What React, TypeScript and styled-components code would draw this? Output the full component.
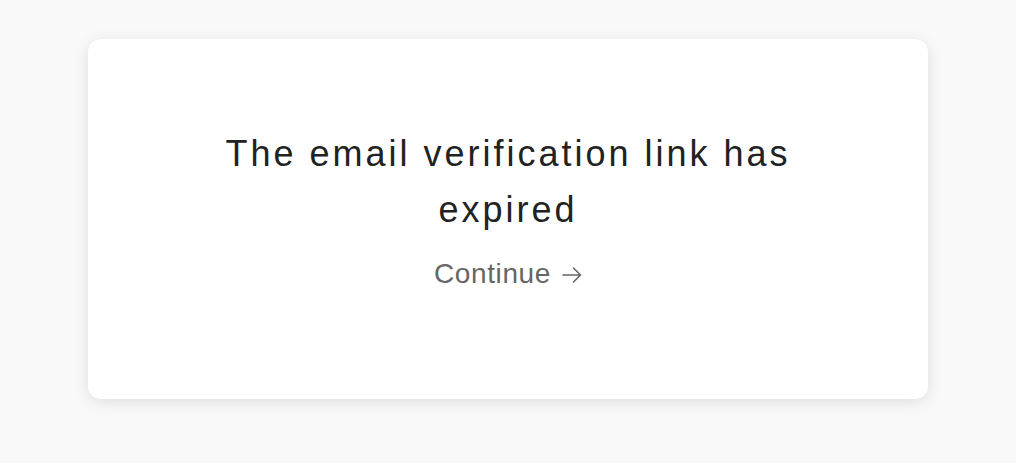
import React from "react";
import styled, { createGlobalStyle } from "styled-components";

const GlobalStyle = createGlobalStyle`
  html, body {
    margin: 0;
    padding: 0;
    background: #f9f9f9;
  }
  body {
    font-family: "Liberation Sans", Arial, Helvetica, sans-serif;
    -webkit-font-smoothing: antialiased;
  }
`;

const Page = styled.main`
  min-height: 463px;
  box-sizing: border-box;
  padding: 39px 88px;
  display: flex;
  justify-content: center;
  align-items: flex-start;
`;

const Card = styled.section`
  width: 840px;
  height: 360px;
  box-sizing: border-box;
  background: #ffffff;
  border-radius: 13px;
  box-shadow: 0 3px 16px rgba(0, 0, 0, 0.11);
  padding: 87px 120px 0;
  display: flex;
  flex-direction: column;
  align-items: center;
`;

const Title = styled.h1`
  margin: 0;
  max-width: 600px;
  font-size: 36px;
  line-height: 56px;
  font-weight: 400;
  letter-spacing: 3px;
  color: #222222;
  text-align: center;
`;

const ContinueLink = styled.a`
  margin-top: 18px;
  display: inline-flex;
  align-items: center;
  gap: 11px;
  font-size: 28px;
  line-height: 36px;
  color: #666666;
  text-decoration: none;
  letter-spacing: 0.6px;
  cursor: pointer;
`;

const Arrow = styled.svg`
  width: 20px;
  height: 16px;
  margin-top: 2px;
  flex: none;
`;

export default function App() {
  return (
    <>
      <GlobalStyle />
      <Page>
        <Card>
          <Title>The email verification link has expired</Title>
          <ContinueLink href="#">
            <span>Continue</span>
            <Arrow viewBox="0 0 20 16" fill="none" stroke="#666666" strokeWidth="1.6" strokeLinecap="round" strokeLinejoin="round">
              <path d="M1 8H18.5M11.5 1L18.5 8L11.5 15" />
            </Arrow>
          </ContinueLink>
        </Card>
      </Page>
    </>
  );
}
